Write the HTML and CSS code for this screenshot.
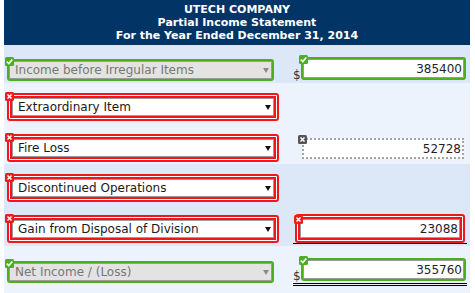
FILE: index.html
```html
<!DOCTYPE html>
<html>
<head>
<meta charset="utf-8">
<link rel="stylesheet" href="styles.css">
</head>
<body>
<div class="sheet">
  <div class="head">
    <div>UTECH COMPANY</div>
    <div>Partial Income Statement</div>
    <div>For the Year Ended December 31, 2014</div>
  </div>

  <div class="band dark">
    <div class="line la">
      <div class="lcell">
        <div class="sel ok">
          <svg class="badge" width="9" height="9" viewBox="0 0 9 9"><rect width="9" height="9" rx="1.5" fill="#4fae1d"/><path d="M1.8 4.6 L3.8 6.6 L7.3 2.4" stroke="#fff" stroke-width="1.6" fill="none"/></svg>
          <div class="selin"><span>Income before Irregular Items</span><i class="arr"></i></div>
        </div>
      </div>
      <div class="rcell ra">
        <span class="dol">$</span>
        <div class="inp ok">
          <svg class="badge bi" width="9" height="9" viewBox="0 0 9 9"><rect width="9" height="9" rx="1.5" fill="#4fae1d"/><path d="M1.8 4.6 L3.8 6.6 L7.3 2.4" stroke="#fff" stroke-width="1.6" fill="none"/></svg>
          <div class="inpin">385400</div>
        </div>
      </div>
    </div>
  </div>

  <div class="band light">
    <div class="line lb">
      <div class="lcell">
        <div class="sel bad">
          <svg class="badge" width="9" height="9" viewBox="0 0 9 9"><rect width="9" height="9" rx="1.5" fill="#ee1c1c"/><path d="M2.5 2.5 L6.5 6.5 M6.5 2.5 L2.5 6.5" stroke="#fff" stroke-width="1.5"/></svg>
          <div class="selin"><span>Extraordinary Item</span><i class="arr"></i></div>
        </div>
      </div>
    </div>
    <div class="line lb2">
      <div class="lcell">
        <div class="sel bad">
          <svg class="badge" width="9" height="9" viewBox="0 0 9 9"><rect width="9" height="9" rx="1.5" fill="#ee1c1c"/><path d="M2.5 2.5 L6.5 6.5 M6.5 2.5 L2.5 6.5" stroke="#fff" stroke-width="1.5"/></svg>
          <div class="selin"><span>Fire Loss</span><i class="arr"></i></div>
        </div>
      </div>
      <div class="rcell rb">
        <div class="inp dot">
          <svg class="badge bd" width="9" height="9" viewBox="0 0 9 9"><rect width="9" height="9" rx="1.5" fill="#555"/><path d="M2.5 2.5 L6.5 6.5 M6.5 2.5 L2.5 6.5" stroke="#fff" stroke-width="1.5"/></svg>
          <div class="inpin">52728</div>
        </div>
      </div>
    </div>
  </div>

  <div class="band dark">
    <div class="line lb">
      <div class="lcell">
        <div class="sel bad">
          <svg class="badge" width="9" height="9" viewBox="0 0 9 9"><rect width="9" height="9" rx="1.5" fill="#ee1c1c"/><path d="M2.5 2.5 L6.5 6.5 M6.5 2.5 L2.5 6.5" stroke="#fff" stroke-width="1.5"/></svg>
          <div class="selin"><span>Discontinued Operations</span><i class="arr"></i></div>
        </div>
      </div>
    </div>
    <div class="line lc2">
      <div class="lcell">
        <div class="sel bad">
          <svg class="badge" width="9" height="9" viewBox="0 0 9 9"><rect width="9" height="9" rx="1.5" fill="#ee1c1c"/><path d="M2.5 2.5 L6.5 6.5 M6.5 2.5 L2.5 6.5" stroke="#fff" stroke-width="1.5"/></svg>
          <div class="selin"><span>Gain from Disposal of Division</span><i class="arr"></i></div>
        </div>
      </div>
      <div class="rcell rc single">
        <div class="inp bad">
          <svg class="badge bb" width="9" height="9" viewBox="0 0 9 9"><rect width="9" height="9" rx="1.5" fill="#ee1c1c"/><path d="M2.5 2.5 L6.5 6.5 M6.5 2.5 L2.5 6.5" stroke="#fff" stroke-width="1.5"/></svg>
          <div class="inpin">23088</div>
        </div>
      </div>
    </div>
  </div>

  <div class="band light">
    <div class="line ld">
      <div class="lcell">
        <div class="sel ok">
          <svg class="badge" width="9" height="9" viewBox="0 0 9 9"><rect width="9" height="9" rx="1.5" fill="#4fae1d"/><path d="M1.8 4.6 L3.8 6.6 L7.3 2.4" stroke="#fff" stroke-width="1.6" fill="none"/></svg>
          <div class="selin"><span>Net Income / (Loss)</span><i class="arr"></i></div>
        </div>
      </div>
      <div class="rcell rd double">
        <span class="dol">$</span>
        <div class="inp ok">
          <svg class="badge bi" width="9" height="9" viewBox="0 0 9 9"><rect width="9" height="9" rx="1.5" fill="#4fae1d"/><path d="M1.8 4.6 L3.8 6.6 L7.3 2.4" stroke="#fff" stroke-width="1.6" fill="none"/></svg>
          <div class="inpin">355760</div>
        </div>
      </div>
    </div>
  </div>
</div>
</body>
</html>
```
FILE: styles.css
```css
html, body {
  margin: 0;
  padding: 0;
  background: #fff;
}
body {
  font-family: "DejaVu Sans", Verdana, sans-serif;
  font-size: 12px;
  color: #1e1e1e;
}
.sheet {
  margin-left: 4px;
  width: 466px;
}
.head {
  background: #023566;
  color: #fff;
  font-weight: bold;
  font-size: 11px;
  line-height: 13px;
  text-align: center;
  padding: 3px 0 3px;
  height: 39px;
}
.band.dark { background: #dce7f7; }
.band.light { background: #edf3fc; }

.line {
  display: flex;
  align-items: flex-start;
}
.la { height: 38px; }
.lb { height: 41px; }
.lb2 { height: 40px; }
.lc2 { height: 41px; }
.ld { height: 47px; }

.lcell {
  width: 286px;
  padding-left: 3px;
  box-sizing: border-box;
  flex: none;
}
.la .lcell { padding-top: 14px; }
.lb .lcell, .lb2 .lcell, .lc2 .lcell { padding-top: 10px; }
.ld .lcell { padding-top: 15px; }

.sel {
  position: relative;
  box-sizing: border-box;
  border-radius: 3px;
}
.sel.ok {
  width: 267px;
  height: 22px;
  border: 2px solid #4fae1d;
}
.sel.bad {
  width: 272px;
  height: 28px;
  border: 2px solid #f0161c;
  padding: 3px;
  background: #fff;
}
.selin {
  box-sizing: border-box;
  height: 18px;
  border: 1px solid #9a9a9a;
  display: flex;
  align-items: center;
  justify-content: space-between;
  padding: 0 2px 0 5px;
  white-space: nowrap;
}
.sel.ok .selin {
  background: #e3e3e3;
  color: #777;
}
.sel.bad .selin {
  background: #fff;
  color: #1a1a1a;
  box-shadow: 0 0 0 2px #f0161c;
}
.arr {
  width: 0;
  height: 0;
  border-left: 3px solid transparent;
  border-right: 3px solid transparent;
  border-top: 5px solid #111;
}
.sel.ok .arr { border-top-color: #8a8a8a; }

.badge {
  position: absolute;
  left: -4px;
  top: -4px;
  display: block;
}
.sel.bad .badge { left: -4px; top: -3px; }

.rcell {
  width: 174px;
  margin-left: 3px;
  display: flex;
  align-items: flex-end;
  box-sizing: border-box;
}
.ra { margin-top: 12px; }
.rb { margin-top: 14px; }
.rc { margin-top: 9px; }
.rd { margin-top: 12px; padding-bottom: 2px; }
.single { border-bottom: 1px solid #000; }
.double { border-bottom: 3px double #000; }

.dol {
  width: 8px;
  font-size: 12px;
  line-height: 12px;
  color: #333;
  margin-bottom: -1px;
}

.inp {
  position: relative;
  box-sizing: border-box;
  border-radius: 3px;
  background: #fff;
}
.inp.ok {
  width: 165px;
  height: 23px;
  border: 2px solid #4fae1d;
}
.inp.dot {
  width: 162px;
  height: 21px;
  margin-left: 9px;
  border: 2px dotted #a3a3a3;
  border-radius: 0;
}
.inp.bad {
  width: 170px;
  height: 29px;
  margin-left: 2px;
  border: 2px solid #f0161c;
  padding: 3px;
}
.inpin {
  box-sizing: border-box;
  height: 100%;
  border: 1px solid #9a9a9a;
  text-align: right;
  padding-right: 1px;
  font-size: 12px;
  display: flex;
  align-items: center;
  justify-content: flex-end;
  color: #1e1e2e;
}
.inp.dot .inpin { border: none; padding-right: 1px; }
.inp.bad .inpin { box-shadow: 0 0 0 2px #f0161c; }
.bi { left: -4px; top: -4px; }
.bd { left: -6px; top: -5px; }
.bb { left: -3px; top: -1px; }
```
